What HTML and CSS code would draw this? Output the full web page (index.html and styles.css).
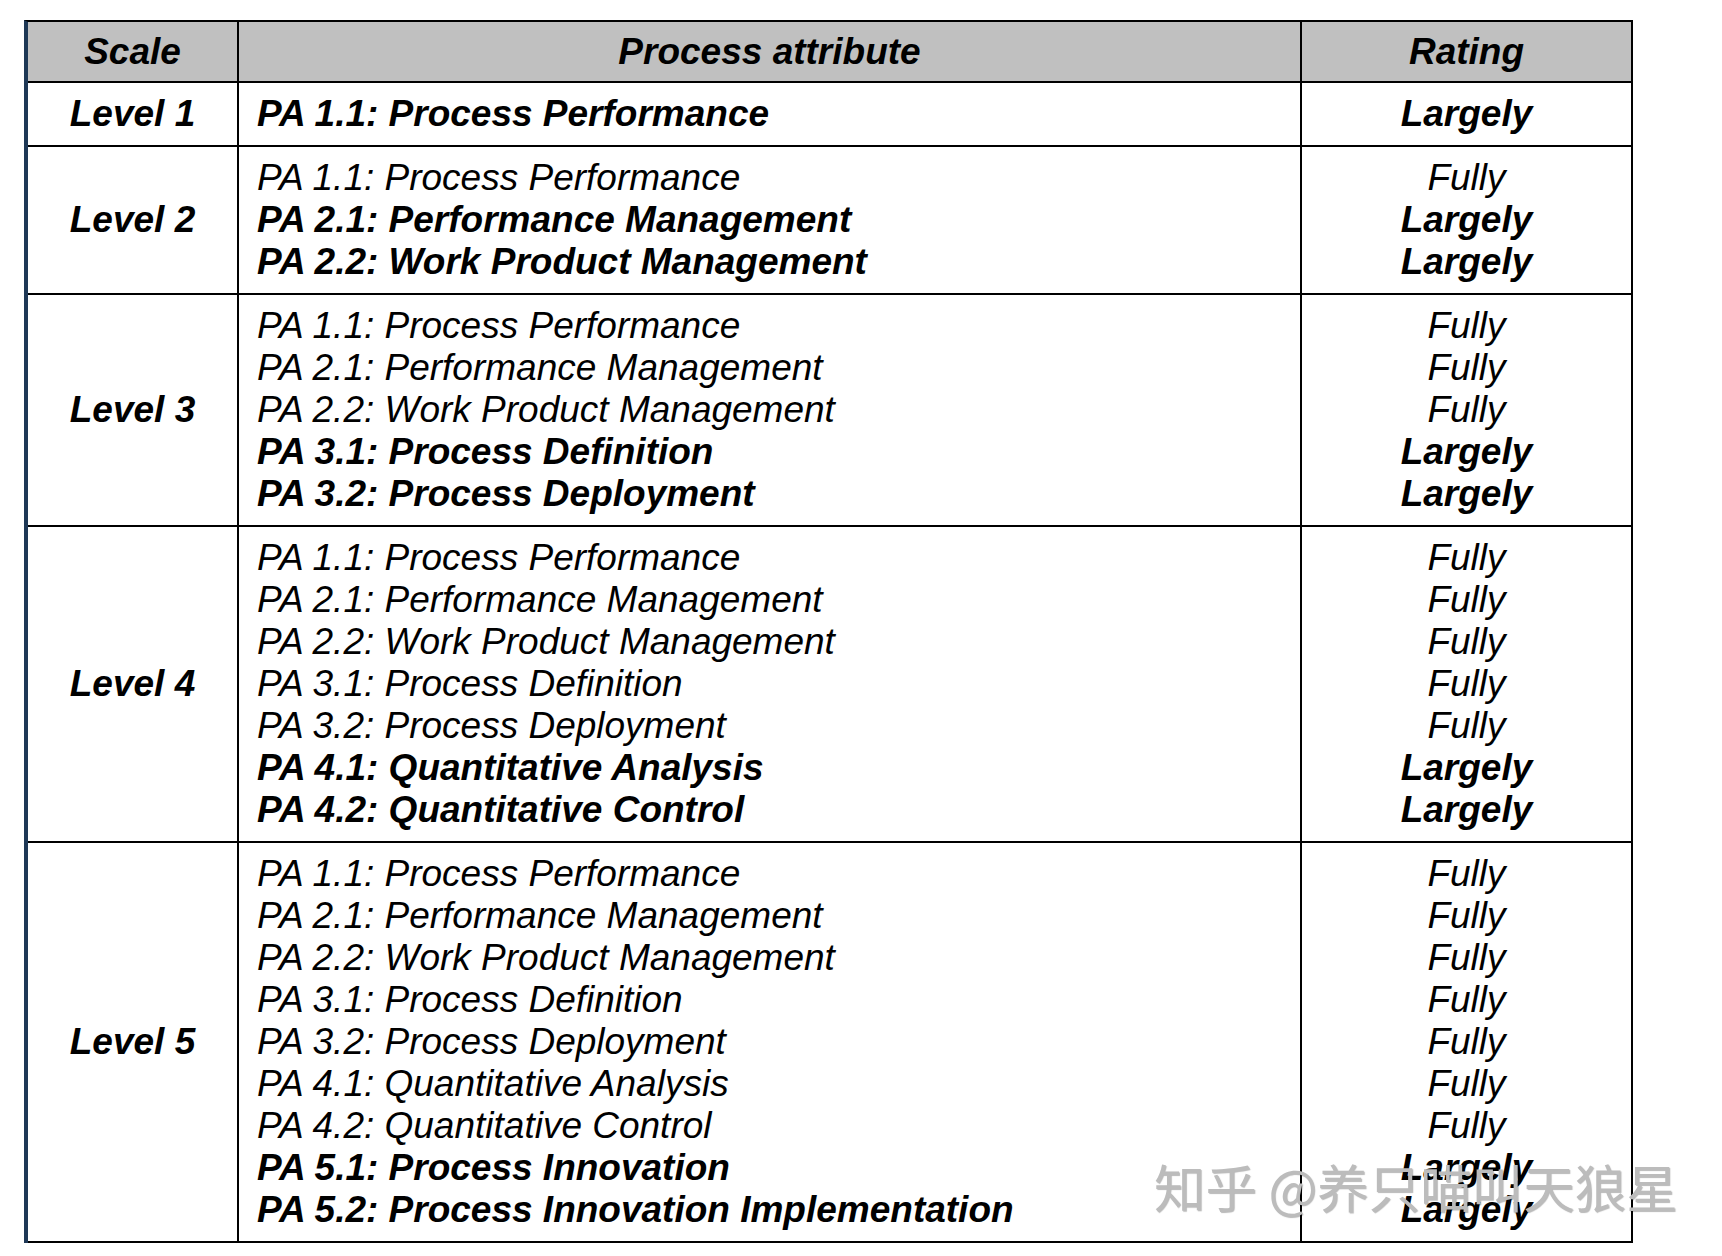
FILE: index.html
```html
<!DOCTYPE html>
<html lang="en">
<head>
<meta charset="utf-8">
<title>Process capability levels</title>
<link rel="stylesheet" href="styles.css">
</head>
<body>
<div class="table">
  <div class="cell head">Scale</div>
  <div class="cell head">Process attribute</div>
  <div class="cell head">Rating</div>

  <div class="cell level">Level 1</div>
  <div class="cell attr"><div class="b">PA 1.1: Process Performance</div></div>
  <div class="cell rate"><div class="b">Largely</div></div>

  <div class="cell level">Level 2</div>
  <div class="cell attr">
    <div>PA 1.1: Process Performance</div>
    <div class="b">PA 2.1: Performance Management</div>
    <div class="b">PA 2.2: Work Product Management</div>
  </div>
  <div class="cell rate">
    <div>Fully</div>
    <div class="b">Largely</div>
    <div class="b">Largely</div>
  </div>

  <div class="cell level">Level 3</div>
  <div class="cell attr">
    <div>PA 1.1: Process Performance</div>
    <div>PA 2.1: Performance Management</div>
    <div>PA 2.2: Work Product Management</div>
    <div class="b">PA 3.1: Process Definition</div>
    <div class="b">PA 3.2: Process Deployment</div>
  </div>
  <div class="cell rate">
    <div>Fully</div>
    <div>Fully</div>
    <div>Fully</div>
    <div class="b">Largely</div>
    <div class="b">Largely</div>
  </div>

  <div class="cell level">Level 4</div>
  <div class="cell attr">
    <div>PA 1.1: Process Performance</div>
    <div>PA 2.1: Performance Management</div>
    <div>PA 2.2: Work Product Management</div>
    <div>PA 3.1: Process Definition</div>
    <div>PA 3.2: Process Deployment</div>
    <div class="b">PA 4.1: Quantitative Analysis</div>
    <div class="b">PA 4.2: Quantitative Control</div>
  </div>
  <div class="cell rate">
    <div>Fully</div>
    <div>Fully</div>
    <div>Fully</div>
    <div>Fully</div>
    <div>Fully</div>
    <div class="b">Largely</div>
    <div class="b">Largely</div>
  </div>

  <div class="cell level">Level 5</div>
  <div class="cell attr">
    <div>PA 1.1: Process Performance</div>
    <div>PA 2.1: Performance Management</div>
    <div>PA 2.2: Work Product Management</div>
    <div>PA 3.1: Process Definition</div>
    <div>PA 3.2: Process Deployment</div>
    <div>PA 4.1: Quantitative Analysis</div>
    <div>PA 4.2: Quantitative Control</div>
    <div class="b">PA 5.1: Process Innovation</div>
    <div class="b">PA 5.2: Process Innovation Implementation</div>
  </div>
  <div class="cell rate">
    <div>Fully</div>
    <div>Fully</div>
    <div>Fully</div>
    <div>Fully</div>
    <div>Fully</div>
    <div>Fully</div>
    <div>Fully</div>
    <div class="b">Largely</div>
    <div class="b">Largely</div>
  </div>
</div>
<div class="watermark">知乎 @养只喵叫天狼星</div>
</body>
</html>
```

FILE: styles.css
```css
html, body {
  margin: 0;
  padding: 0;
  background: #ffffff;
}

body {
  font-family: "Liberation Sans", Arial, sans-serif;
  font-style: italic;
  font-size: 37px;
  color: #000;
}

.table {
  display: grid;
  grid-template-columns: 211px 1063px 331px;
  width: max-content;
  margin: 20px 0 0 24px;
  border-left: 4px solid #1e3856;
  border-top: 2px solid #000;
}

.cell {
  box-sizing: border-box;
  border-right: 2px solid #000;
  border-bottom: 2px solid #000;
  padding: 10px 0;
  line-height: 42px;
  white-space: nowrap;
}

.head {
  background: #c0c0c0;
  padding: 9px 0 8px;
  text-align: center;
  font-weight: bold;
}

.level {
  display: flex;
  align-items: center;
  justify-content: center;
  font-weight: bold;
}

.attr {
  padding-left: 18px;
}

.rate {
  text-align: center;
}

.b {
  font-weight: bold;
}

.watermark {
  position: absolute;
  left: 1154px;
  top: 1161px;
  font-family: "Noto Sans CJK SC", sans-serif;
  font-style: normal;
  font-size: 51.5px;
  line-height: 50px;
  color: #bcbcbc;
  text-shadow: 1px 1px 1px rgba(0, 0, 0, 0.28);
  white-space: nowrap;
  pointer-events: none;
}
```
